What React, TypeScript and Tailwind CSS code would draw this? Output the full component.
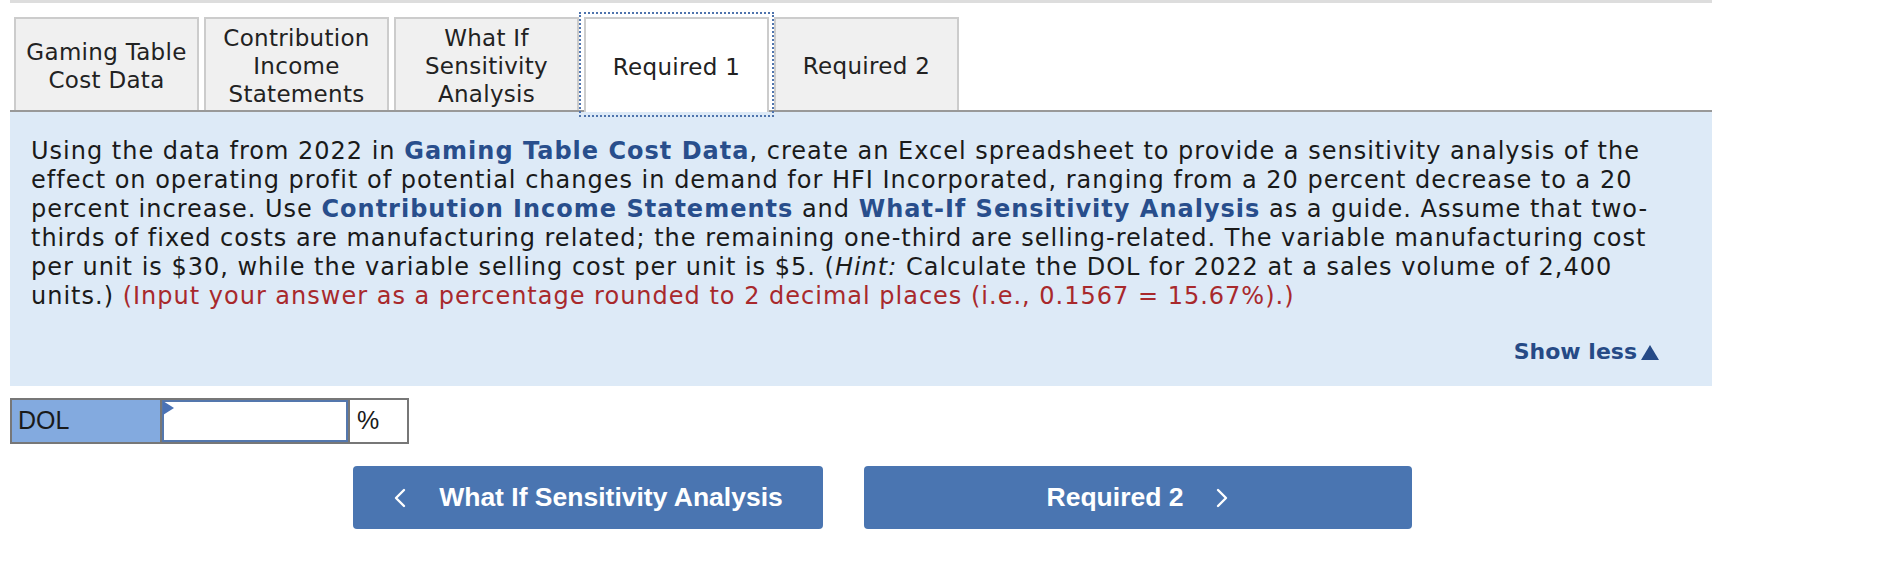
import React from 'react';

const tabs = [
  { key: 'gaming', lines: ['Gaming Table', 'Cost Data'] },
  { key: 'contribution', lines: ['Contribution', 'Income', 'Statements'] },
  { key: 'whatif', lines: ['What If', 'Sensitivity', 'Analysis'] },
  { key: 'req1', lines: ['Required 1'] },
  { key: 'req2', lines: ['Required 2'] },
];

const verdana = 'font-["Verdana","DejaVu_Sans",sans-serif]';

function Tab({ lines, active }: { lines: string[]; active: boolean }) {
  return (
    <div
      className={`w-[185px] flex items-center justify-center text-center border-2 border-b-0 border-[#cccccc] text-[23px] leading-[28px] tracking-[0.3px] text-[#222] ${
        active
          ? 'relative z-10 h-[95px] bg-white outline-2 outline-dotted outline-[#4f74ad] outline-offset-[3px]'
          : 'h-[93px] bg-[#f0f0f0]'
      }`}
    >
      <div className="mt-[2px]">
        {lines.map((l) => (
          <div key={l}>{l}</div>
        ))}
      </div>
    </div>
  );
}

function Chevron({ dir }: { dir: 'left' | 'right' }) {
  return (
    <svg width="14" height="20" viewBox="0 0 14 20" fill="none">
      <path
        d={dir === 'left' ? 'M11 2 L3 10 L11 18' : 'M3 2 L11 10 L3 18'}
        stroke="white"
        strokeWidth="2.4"
        strokeLinecap="round"
        strokeLinejoin="round"
      />
    </svg>
  );
}

export default function App() {
  const link = 'font-bold text-[#284e8c]';
  return (
    <div className={`w-[1890px] h-[566px] bg-white overflow-hidden ${verdana}`}>
      {/* top rule */}
      <div className="ml-[10px] w-[1702px] h-[3px] bg-[#dddddd]" />

      {/* tabs */}
      <div className="ml-[10px] pl-[4px] mt-[14px] flex items-start gap-[5px] -mb-[2px] h-[95px]">
        {tabs.map((t) => (
          <Tab key={t.key} lines={t.lines} active={t.key === 'req1'} />
        ))}
      </div>

      {/* question panel */}
      <div className="ml-[10px] w-[1702px] border-t-2 border-[#999999] bg-[#ddeaf7] pl-[21px] pr-[52px] pt-[25px] pb-[20px]">
        <p className="text-[24px] leading-[29px] tracking-[1px] text-[#1a1a1a] max-w-[1652px]">
          Using the data from 2022 in <span className={link}>Gaming Table Cost Data</span>, create an Excel
          spreadsheet to provide a sensitivity analysis of the effect on operating profit of potential changes in
          demand for HFI Incorporated, ranging from a 20 percent decrease to a 20 percent increase. Use{' '}
          <span className={link}>Contribution Income Statements</span> and{' '}
          <span className={link}>What-If Sensitivity Analysis</span> as a guide. Assume that two-thirds of fixed
          costs are manufacturing related; the remaining one-third are selling-related. The variable manufacturing
          cost per unit is $30, while the variable selling cost per unit is $5. (<i>Hint:</i> Calculate the DOL for
          2022 at a sales volume of 2,400 units.){' '}
          <span className="text-[#a8292c]">
            (Input your answer as a percentage rounded to 2 decimal places (i.e., 0.1567 = 15.67%).)
          </span>
        </p>
        <div className="mt-[27px] flex justify-end">
          <span className="text-[22px] leading-[28px] font-bold text-[#264a86] flex items-center gap-[3px]">
            Show less
            <svg width="20" height="17" viewBox="0 0 20 17">
              <path d="M10 1 L19 16 L1 16 Z" fill="#264a86" />
            </svg>
          </span>
        </div>
      </div>

      {/* answer row */}
      <div className='ml-[10px] mt-[12px] flex h-[46px] font-["Liberation_Sans",Arial,sans-serif] text-[25px] text-[#1a1a1a]'>
        <div className="w-[152px] border-2 border-[#777777] bg-[#83aadf] pl-[6px] flex items-center">DOL</div>
        <div className="relative w-[190px] -ml-[2px] border-2 border-[#777777] bg-white">
          <div className="h-full border-2 border-[#5477ad]" />
          <svg className="absolute left-[1px] top-[1px]" width="12" height="15" viewBox="0 0 12 15">
            <path d="M0 0 L11 7 L0 14 Z" fill="#4a72b5" />
          </svg>
        </div>
        <div className="w-[61px] -ml-[2px] border-2 border-[#777777] bg-white pl-[7px] flex items-center">%</div>
      </div>

      {/* navigation buttons */}
      <div className='ml-[353px] mt-[22px] flex gap-[41px] font-["Liberation_Sans",Arial,sans-serif]'>
        <button className="w-[470px] h-[63px] rounded-[4px] bg-[#4a75b1] flex items-center justify-center gap-[32px] text-white font-bold text-[26.5px]">
          <Chevron dir="left" />
          <span>What If Sensitivity Analysis</span>
        </button>
        <button className="w-[548px] h-[63px] rounded-[4px] bg-[#4a75b1] flex items-center justify-center gap-[32px] text-white font-bold text-[26.5px]">
          <span>Required 2</span>
          <Chevron dir="right" />
        </button>
      </div>
    </div>
  );
}
